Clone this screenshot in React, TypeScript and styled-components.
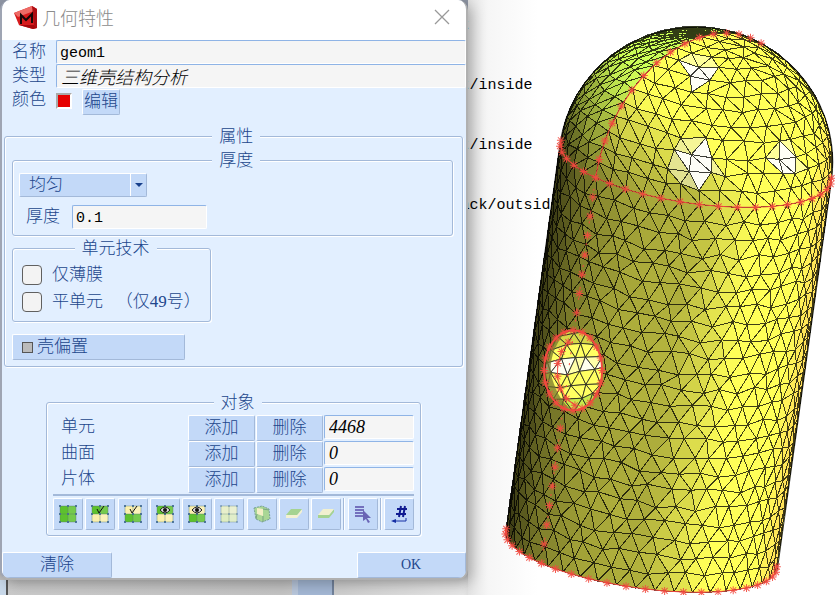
import React from "react";
import styled, { createGlobalStyle, css } from "styled-components";

const ink = "#21468c";
const panel = "#e2efff";
const buttonBlue = "#c3d9f8";
const line = "#a3b9d9";
const mono = `"Liberation Mono", "Noto Sans CJK SC", monospace`;
const serif = `"Liberation Serif", "Noto Sans CJK SC", serif`;

const GlobalStyle = createGlobalStyle`
  * { box-sizing: border-box; }
  body {
    margin: 0;
    background: #fff;
    overflow: hidden;
    color: ${ink};
    font: 300 17px/18px ${serif};
  }
  button, input, select { font: inherit; color: inherit; border-radius: 0; }
`;

/* ---------- mesh model ---------- */

type Pt = [number, number];
type Node = { p: Pt; nx: number; ny: number; nz: number };

const C: Pt = [695.5, 162];
const U: Pt = [135.5, 19];
const V: Pt = [-6, 41];
const W: Pt = [18, -128];
const HEIGHT = 3.03;
const SEAM = (135 * Math.PI) / 180;

let seed = 11;
const rnd = () => {
  seed = (seed * 16807) % 2147483647;
  return seed / 2147483647 - 0.5;
};

const place = (x: number, y: number, z: number): Pt => {
  const v = z < 0 ? y * (1 + z * 0.03) : y;
  return [
    C[0] + U[0] * x + V[0] * v + W[0] * z,
    C[1] + U[1] * x + V[1] * v + W[1] * z,
  ];
};
const wall = (t: number, h: number): Node => ({
  p: place(Math.cos(t), Math.sin(t), -h),
  nx: Math.cos(t),
  ny: Math.sin(t),
  nz: 0,
});
const cap = (t: number, f: number): Node => {
  const c = Math.cos(f);
  const x = Math.cos(t) * c;
  const y = Math.sin(t) * c;
  const z = Math.sin(f);
  return { p: place(x, y, z), nx: x, ny: y, nz: z };
};

const glints: [number, number, number][] = [
  [697, 72, 13],
  [696, 164, 17],
  [785, 161, 12],
];

const faces: { d: string; fill: string }[] = [];
const edges: string[] = [];
const pt = (p: Pt) => `${p[0].toFixed(1)} ${p[1].toFixed(1)}`;

const addFace = (a: Node, b: Node, c: Node, green: boolean) => {
  const nx = (a.nx + b.nx + c.nx) / 3;
  const ny = (a.ny + b.ny + c.ny) / 3;
  const nz = (a.nz + b.nz + c.nz) / 3;
  if (ny * 0.956 + nz * 0.3 < 0.005) return;
  const mx = (a.p[0] + b.p[0] + c.p[0]) / 3;
  const my = (a.p[1] + b.p[1] + c.p[1]) / 3;
  let k = 0.69 + nz * 0.55 + rnd() * 0.035;
  k += nx > 0 ? nx * 0.64 : -0.33 * nx ** 2 - 0.16 * nx ** 6;
  k = Math.max(0.16, Math.min(1, k));
  let r = 255 * k;
  let g = 255 * k;
  let bl = 88 * k;
  if (green) {
    r *= 1 - Math.min(0.2, nz * 0.25);
  }
  if (nx > 0.85) g *= 1 - (nx - 0.85) * 0.9;
  for (const [gx, gy, gr] of glints) {
    const dist = Math.hypot(mx - gx, my - gy);
    const w = dist < gr ? 0.95 : dist < gr * 1.35 ? 0.4 : 0;
    r += (255 - r) * w;
    g += (255 - g) * w;
    bl += (255 - bl) * w;
  }
  const d = `M${pt(a.p)}L${pt(b.p)}L${pt(c.p)}Z`;
  faces.push({ d, fill: `rgb(${r | 0},${g | 0},${bl | 0})` });
  edges.push(d);
};

const strip = (lo: Node[], hi: Node[], green: boolean) => {
  let i = 0;
  let j = 0;
  while (i < lo.length - 1 || j < hi.length - 1) {
    const a = (i + 0.5) / (lo.length - 1);
    const b = hi.length > 1 ? (j + 0.5) / (hi.length - 1) : 9;
    if (j >= hi.length - 1 || (i < lo.length - 1 && a <= b)) {
      addFace(lo[i], lo[i + 1], hi[j], green);
      i++;
    } else {
      addFace(lo[i], hi[j], hi[j + 1], green);
      j++;
    }
  }
};

const N = 44;
const ROWS = 23;
const wallRows: Node[][] = [];
for (let r = 0; r <= ROWS; r++) {
  const row: Node[] = [];
  const end = r === 0 || r === ROWS;
  for (let k = 0; k <= N; k++) {
    const jt = end ? 0 : rnd() * 0.34;
    const jh = end ? 0 : rnd() * 0.36;
    const t = SEAM - ((k + (r % 2 ? 0.5 : 0) + jt) * 2 * Math.PI) / N;
    row.push(wall(t, ((r + jh) / ROWS) * HEIGHT));
  }
  row[N] = row[0];
  wallRows.push(row);
}
for (let r = 0; r < ROWS; r++) {
  for (let k = 0; k < N; k++) {
    const a = wallRows[r];
    const b = wallRows[r + 1];
    if (r % 2 === 0) {
      addFace(a[k], a[k + 1], b[k], false);
      addFace(b[k], b[k + 1], a[k + 1], false);
    } else {
      addFace(a[k], b[k], b[k + 1], false);
      addFace(a[k], a[k + 1], b[k + 1], false);
    }
  }
}

const CAPS = 13;
for (const green of [false, true]) {
  let prev: Node[] | null = null;
  for (let r = 0; r <= CAPS; r++) {
    const f = (r / CAPS) * (Math.PI / 2);
    const n = green ? (r === CAPS ? 1 : 22 - Math.floor(r / 3)) : Math.max(1, Math.round(22 * Math.cos(f)));
    const row: Node[] = [];
    for (let k = 0; k <= n; k++) {
      const inner = k > 0 && k < n && r > 0 && r < CAPS;
      const s = (k + (inner ? rnd() * 0.34 : 0)) / n;
      const ff = f + (inner ? rnd() * 0.035 : 0);
      row.push(cap(SEAM + (green ? s : -s) * Math.PI, ff));
    }
    if (prev) strip(prev, row, green);
    prev = row;
  }
}

const star = ([x, y]: Pt) =>
  `M${(x - 4).toFixed(1)} ${y.toFixed(1)}h8M${x.toFixed(1)} ${(y - 4).toFixed(1)}v8M${(x - 3).toFixed(1)} ${(y - 3).toFixed(1)}l6 6m0 -6l-6 6`;

const ringTop: Pt[] = [];
const ringLow: Pt[] = [];
for (let k = 0; k <= 44; k++) {
  const t = SEAM - (k * 2 * Math.PI) / N;
  if (Math.sin(t) > -0.12) {
    ringTop.push(wall(t, 0).p);
    ringLow.push(wall(t, HEIGHT).p);
  }
}
const byX = (a: Pt, b: Pt) => a[0] - b[0];
ringTop.sort(byX);
ringLow.sort(byX);
const seamCap: Pt[] = [];
for (let k = 0; k <= 11; k++) seamCap.push(cap(SEAM, (k / 11) * (Math.PI / 2)).p);
const seamBack: Pt[] = [];
for (let k = 1; k <= 4; k++) seamBack.push(cap(SEAM - Math.PI, Math.PI / 2 - k * 0.13).p);
const seamWall: Pt[] = [];
for (let k = 1; k < 20; k++) if (k < 8 || k > 12) seamWall.push(wall(SEAM, (k / 20) * HEIGHT).p);
const poly = (ps: Pt[]) => "M" + ps.map(pt).join("L");

const rim = (cx: number, cy: number, rx: number, ry: number, n: number, from = 0, to = 360): Pt[] =>
  Array.from({ length: n }, (_, i) => {
    const a = ((from + ((to - from) * i) / n) * Math.PI) / 180;
    return [cx + rx * Math.cos(a), cy + ry * Math.sin(a)] as Pt;
  });
const holeStars = rim(573, 370, 29, 40, 20);
const innerStars = rim(584, 371, 27, 36, 7, 110, 255);

const holeFaces: { d: string; fill: string }[] = [];
const grid: Pt[][] = [];
for (let r = 0; r < 8; r++) {
  grid.push(
    Array.from({ length: 7 }, (_, c) => [
      538 + c * 14 + (r % 2) * 7 + rnd() * 5,
      323 + r * 13 - c * 1.5 + rnd() * 5,
    ] as Pt),
  );
}
for (let r = 0; r < 7; r++) {
  for (let c = 0; c < 6; c++) {
    const q = [grid[r][c], grid[r][c + 1], grid[r + 1][c], grid[r + 1][c + 1]];
    const tris = r % 2 ? [[q[0], q[1], q[3]], [q[0], q[2], q[3]]] : [[q[0], q[1], q[2]], [q[1], q[2], q[3]]];
    for (const t of tris) {
      const my = (t[0][1] + t[1][1] + t[2][1]) / 3;
      const fill = my < 345 ? "#d5d748" : my > 360 && my < 371 ? (rnd() > 0 ? "#fffff0" : "#ffffa8") : my > 397 ? "#c8ea4c" : "#ffff62";
      holeFaces.push({ d: poly(t) + "Z", fill });
    }
  }
}

const outline = "M506 531L560 143A136 134 0 0 1 831 181L777 569";

const Model = () => (
  <ModelSvg viewBox="468 0 367 595" role="img" aria-label="三维壳结构网格">
    <defs>
      <clipPath id="hole"><ellipse cx="574" cy="370" rx="28" ry="39" /></clipPath>
      <linearGradient id="body">
        <stop offset="0" stopColor="#25250d" />
        <stop offset=".5" stopColor="#b0b040" />
        <stop offset=".9" stopColor="#ffff55" />
      </linearGradient>
    </defs>
    <path d={`${outline}A137 39 8 0 1 506 531Z`} fill="url(#body)" />
    {faces.map((f, i) => <path key={i} d={f.d} fill={f.fill} />)}
    <path d={edges.join("")} fill="none" stroke="#000" strokeOpacity=".75" strokeWidth="1" shapeRendering="crispEdges" />
    <path d={outline} fill="none" stroke="#000" strokeOpacity=".8" />
    <g clipPath="url(#hole)">
      {holeFaces.map((f, i) => <path key={i} d={f.d} fill={f.fill} stroke="#222" strokeWidth=".8" />)}
      <path d="M544 330h22q-20 26 -14 48q8 26 24 34h-34z" fill="#77752c" fillOpacity=".75" />
    </g>
    <g fill="none" stroke="#f2493f">
      <ellipse cx="573" cy="370" rx="29" ry="40" strokeWidth="2" />
      <path d={poly(innerStars)} />
      <path d={poly(ringTop)} />
      <path d={poly(ringLow)} />
      <path d={poly(seamCap)} />
      <path d={poly([wall(SEAM, 0).p, wall(SEAM, HEIGHT).p])} strokeDasharray="2 9" />
      <path
        d={[...ringTop, ...ringLow, ...seamCap, ...seamBack, ...seamWall, ...holeStars, ...innerStars].map(star).join("")}
        strokeOpacity=".9"
      />
    </g>
  </ModelSvg>
);

/* ---------- layout ---------- */

const Desktop = styled.main`
  display: grid;
  grid-template-columns: 56% 1fr;
  min-height: 100vh;
  background: #fff;
`;
const WindowColumn = styled.div`
  display: flex;
  flex-direction: column;
  z-index: 1;
  background: linear-gradient(#8f96a5, #a5abba);
`;
const Backdrop = styled.div`
  display: flex;
  flex: 1;
  min-height: 16px;
  margin-top: -12px;
  padding-top: 12px;
  background: linear-gradient(90deg, #cbcbcb, #c4c4c4 60%, #e8e8e8);
  box-shadow: inset 0 14px 12px -6px #aaa;
`;
const EdgeStrip = styled.i`
  width: 8px;
  background: #c9d9ea;
  border-right: 2px solid #555;
`;
const BlueStrip = styled.i`
  width: 42px;
  margin-left: auto;
  margin-right: 134px;
  background: #a4b8d5;
  border-left: 6px solid #b9c7dc;
  border-right: 2px solid #73839c;
`;
const Scene = styled.section`
  display: grid;
  position: relative;
  background: linear-gradient(90deg, #e3e3e3, #f6f6f6 20px, #fff 70px);
`;
const ModelSvg = styled.svg`
  grid-area: 1 / 1;
  display: block;
  width: 100%;
  overflow: hidden;
  z-index: 1;
`;
const Notes = styled.ul`
  grid-area: 1 / 1;
  margin: 16px 0 0 -7px;
  padding: 0;
  list-style: none;
  color: #000;
  font: 400 15px/20px ${mono};
  display: grid;
  align-content: start;
  gap: 40px;
`;

const Dialog = styled.form`
  z-index: 1;
  display: flex;
  flex-direction: column;
  background: ${panel};
  border: 2px solid #b0b0b0;
  border-top: 0;
  border-left-color: #9fa5b3;
  border-radius: 10px;
  overflow: hidden;
  box-shadow: 4px 4px 14px #0004;
`;
const TitleBar = styled.header`
  display: flex;
  align-items: center;
  height: 40px;
  padding: 0 14px 6px 11px;
  gap: 4px;
  background: #fff;
`;
const Title = styled.h1`
  flex: 1;
  margin: 0;
  font: 300 18px/24px "Noto Sans CJK SC", sans-serif;
  color: #8b8b8b;
`;
const CloseButton = styled.button`
  display: flex;
  padding: 1px;
  border: 0;
  background: none;
`;

const raised = css`
  background: ${buttonBlue};
  border: 1px solid;
  border-color: #fff ${line} ${line} #fff;
  border-radius: 2px;
`;
const Button = styled.button<{ $w?: number }>`
  ${raised}
  height: 26px;
  width: ${(p) => (p.$w ? `${p.$w}px` : "auto")};
  padding: 0;
  line-height: 24px;
`;
const Field = styled.input`
  flex: 1;
  min-width: 0;
  height: 24px;
  padding: 2px 3px 0;
  color: #000;
  background: #f5f5f5;
  border: 1px solid;
  border-color: #8fb4e6 #fff #fff #8fb4e6;
  border-radius: 2px;
  font: 400 15px/18px ${mono};
`;
const ItalicField = styled(Field)`
  padding: 0 4px;
  font: italic 300 18px/20px ${serif};
`;
const PropertyRow = styled.div`
  display: flex;
  height: 24px;
  padding-left: 10px;
`;
const RowLabel = styled.label`
  width: 44px;
  line-height: 24px;
`;
const Swatch = styled.span`
  width: 16px;
  height: 16px;
  margin: 5px 10px 0 0;
  background: #e60000;
  border: 2px solid;
  border-color: #aaa #fff #fff #aaa;
`;
const EditButton = styled(Button)`
  margin-top: 1px;
`;

const Group = styled.fieldset`
  min-width: 0;
  margin: 0;
  padding: 0;
  border: 1px solid ${line};
  border-radius: 3px;
  box-shadow: inset 1px 1px #fff, 1px 1px #fff;
`;
const Legend = styled.legend<{ $half?: number }>`
  margin: 0 auto 0 calc(50% - ${(p) => p.$half ?? 20}px);
  padding: 1px 7px 0;
  background: ${panel};
  line-height: 17px;
`;
const AttributeGroup = styled(Group)`
  margin: 15px 3px 0 2px;
  padding: 6px 9px 6px 7px;
`;
const ThicknessGroup = styled(Group)`
  padding: 4px 6px 6px;
`;
const TechniqueGroup = styled(Group)`
  width: 199px;
  margin-top: 3px;
  padding: 8px 9px 9px;
`;
const SelectBox = styled.div`
  ${raised}
  display: flex;
  position: relative;
  width: 128px;
  height: 24px;
`;
const Select = styled.select`
  appearance: none;
  flex: 1;
  padding: 0 0 0 9px;
  border: 0;
  background: none;
`;
const SelectArrow = styled.span`
  position: absolute;
  inset: 0 0 0 auto;
  display: flex;
  width: 16px;
  align-items: center;
  justify-content: center;
  border-left: 1px solid #fff;
  pointer-events: none;
`;
const ThicknessRow = styled.div`
  display: flex;
  width: 188px;
  margin-top: 8px;
  padding-left: 7px;
  label { width: 46px; line-height: 24px; }
`;
const CheckRow = styled.label`
  display: flex;
  align-items: center;
  gap: 10px;
  height: 20px;
  & + & { margin-top: 7px; }
  span { white-space: pre; }
`;
const Checkbox = styled.input`
  appearance: none;
  width: 20px;
  height: 20px;
  margin: 0;
  background: #f3f3f3;
  border: 1px solid #606060;
  border-radius: 4px;
`;
const OffsetButton = styled(Button)`
  display: flex;
  align-items: center;
  gap: 4px;
  width: 173px;
  margin-top: 12px;
  padding-left: 9px;
  i { width: 11px; height: 11px; background: #bbb; border: 1px solid #555; }
`;
const ObjectGroup = styled(Group)`
  width: 375px;
  margin: 26px 0 0 44px;
  padding: 4px 6px 5px;
`;
const ObjectRow = styled.div`
  display: flex;
  gap: 1px;
  height: 26px;
  label { flex: 1; padding-left: 8px; line-height: 24px; }
  input { flex: 0 0 90px; }
`;
const Toolbar = styled.div`
  display: flex;
  justify-content: space-between;
  margin-top: 1px;
  padding-top: 2px;
  border-top: 2px solid ${line};
`;
const IconButton = styled.button`
  ${raised}
  display: flex;
  align-items: center;
  justify-content: center;
  width: 30px;
  height: 32px;
  padding: 0;
`;
const Divider = styled.i`
  width: 2px;
  border-left: 1px solid ${line};
  border-right: 1px solid #fff;
`;
const Footer = styled.footer`
  display: flex;
  justify-content: space-between;
  margin-top: 16px;
`;
const OkButton = styled(Button)`
  font-size: 14px;
  font-weight: 400;
`;

/* ---------- icons ---------- */

const Logo = () => (
  <svg width="25" height="25" viewBox="0 0 25 25">
    <path d="M1 8L19 1l5 3v19l-4 1L6 20z" fill="#d71a1c" />
    <path d="M1 8L19 1l2 5L5 12z" fill="#ee6b66" />
    <path d="M19 1l5 3v19l-3-3z" fill="#ad0c12" />
    <path d="M6 20l15 0 3 3-4 1z" fill="#a5060b" />
    <path d="M8 19V10l5 5 6-6v9" fill="none" stroke="#160808" strokeWidth="2" />
  </svg>
);

const G = "#5dc12e";
const Y = "#fbf0ad";
type Mark = "check" | "eye" | "none";

const Grid = ({ top, low, mark = "none", faded }: { top: string; low: string; mark?: Mark; faded?: boolean }) => (
  <svg width="18" height="18" viewBox="0 0 18 18" opacity={faded ? 0.8 : 1}>
    <path d="M1 1h16v8H1z" fill={top} />
    <path d="M1 9h16v8H1z" fill={low} />
    <path d="M9 1h8v16H9z" fill="#fff" fillOpacity=".15" />
    <path d="M1 1h16v16H1zM9 1v16M1 9h16" fill="none" stroke="#567a68" strokeOpacity=".4" />
    <path
      d="M0 0h2v2H0zM8 0h2v2H8zM16 0h2v2h-2zM0 8h2v2H0zM8 8h2v2H8zM16 8h2v2h-2zM0 16h2v2H0zM8 16h2v2H8zM16 16h2v2h-2z"
      fill="#446d92"
      fillOpacity={faded ? 0.5 : 0.9}
    />
    {mark === "check" && <path d="M6 4l2 4 5-7" fill="none" stroke="#111" />}
    {mark === "eye" && (
      <>
        <path d="M4 5q5-6 10 0q-5 6 -10 0z" fill="#ddd" stroke="#222" />
        <circle cx="9" cy="5" r="2" fill="#111" />
      </>
    )}
  </svg>
);
const Solid = () => (
  <svg width="18" height="18" viewBox="0 0 18 18">
    <path d="M1 3l8-2 7 3 1 10-8 3-6-3z" fill="#a9d695" stroke="#78a096" strokeDasharray="2 1" />
    <path d="M4 3l6 1v7l-6-2z" fill="#f3efc5" />
    <path d="M10 4l6 1M10 11v6M4 9l-1 5" stroke="#79a582" />
  </svg>
);
const Slab = ({ top, low }: { top: string; low: string }) => (
  <svg width="18" height="18" viewBox="0 0 18 18">
    <path d="M1 10h11l5-6v3l-5 6H1z" fill={low} />
    <path d="M1 10L6 4h11l-5 6z" fill={top} />
  </svg>
);
const ListCursor = () => (
  <svg width="18" height="18" viewBox="0 0 18 18">
    <path d="M1 2h9M1 5h9M1 8h8M1 11h9" stroke="#7370bd" strokeWidth="2" />
    <path d="M9 5l8 8-4 0 3 4-2 1-2-4-3 2z" fill="#6964b5" />
  </svg>
);
const NumberArrow = () => (
  <svg width="18" height="18" viewBox="0 0 18 18">
    <path d="M11 1L9 12M15 1l-2 11M7 4h10M6 9h10" stroke="#101b91" strokeWidth="2" />
    <path d="M3 16h13v-3" fill="none" stroke="#1630a5" />
    <path d="M1 16l5-2v4z" fill="#1630a5" />
  </svg>
);

const tools = [
  { name: "全部", icon: <Grid top={G} low={G} /> },
  { name: "选中上部", icon: <Grid top={G} low={Y} mark="check" /> },
  { name: "选中下部", icon: <Grid top={Y} low={G} mark="check" /> },
  { name: "可见上部", icon: <Grid top={G} low={Y} mark="eye" /> },
  { name: "可见下部", icon: <Grid top={Y} low={G} mark="eye" /> },
  { name: "轮廓", icon: <Grid top="#f2f5c0" low="#e6f2b4" faded /> },
  { name: "实体", icon: <Solid /> },
  { name: "顶面", icon: <Slab top="#a5d391" low="#f3f1d2" /> },
  { name: "底面", icon: <Slab top="#f1f0cf" low="#a5d391" /> },
];

const objects = [
  { id: "elements", name: "单元", count: "4468" },
  { id: "surfaces", name: "曲面", count: "0" },
  { id: "sheets", name: "片体", count: "0" },
];

export default function App() {
  return (
    <>
      <GlobalStyle />
      <Desktop>
        <WindowColumn>
          <Dialog onSubmit={(e) => e.preventDefault()}>
            <TitleBar>
              <Logo />
              <Title>几何特性</Title>
              <CloseButton type="button" aria-label="关闭">
                <svg width="18" height="18" viewBox="0 0 18 18">
                  <path d="M2 2l14 14M16 2L2 16" stroke="#999" strokeWidth="1.3" />
                </svg>
              </CloseButton>
            </TitleBar>
            <PropertyRow>
              <RowLabel htmlFor="name">名称</RowLabel>
              <Field id="name" defaultValue="geom1" />
            </PropertyRow>
            <PropertyRow>
              <RowLabel htmlFor="type">类型</RowLabel>
              <ItalicField id="type" readOnly value="三维壳结构分析" />
            </PropertyRow>
            <PropertyRow>
              <RowLabel htmlFor="color">颜色</RowLabel>
              <Swatch />
              <EditButton id="color" type="button" $w={38}>编辑</EditButton>
            </PropertyRow>
            <AttributeGroup>
              <Legend>属性</Legend>
              <ThicknessGroup>
                <Legend>厚度</Legend>
                <SelectBox>
                  <Select aria-label="厚度分布" defaultValue="均匀">
                    <option>均匀</option>
                  </Select>
                  <SelectArrow>
                    <svg width="8" height="4" viewBox="0 0 8 4"><path d="M0 0h8L4 4z" fill="#173f8b" /></svg>
                  </SelectArrow>
                </SelectBox>
                <ThicknessRow>
                  <label htmlFor="thickness">厚度</label>
                  <Field id="thickness" defaultValue="0.1" />
                </ThicknessRow>
              </ThicknessGroup>
              <TechniqueGroup>
                <Legend $half={37}>单元技术</Legend>
                <CheckRow><Checkbox type="checkbox" /><span>仅薄膜</span></CheckRow>
                <CheckRow><Checkbox type="checkbox" /><span>平单元{"   "}（仅49号）</span></CheckRow>
              </TechniqueGroup>
              <OffsetButton type="button"><i />壳偏置</OffsetButton>
            </AttributeGroup>
            <ObjectGroup>
              <Legend>对象</Legend>
              {objects.map((o) => (
                <ObjectRow key={o.id}>
                  <label htmlFor={o.id}>{o.name}</label>
                  <Button type="button" $w={67}>添加</Button>
                  <Button type="button" $w={67}>删除</Button>
                  <ItalicField id={o.id} readOnly value={o.count} />
                </ObjectRow>
              ))}
              <Toolbar>
                {tools.map((t) => (
                  <IconButton key={t.name} type="button" aria-label={t.name}>{t.icon}</IconButton>
                ))}
                <Divider />
                <IconButton type="button" aria-label="列表选择"><ListCursor /></IconButton>
                <Divider />
                <IconButton type="button" aria-label="编号"><NumberArrow /></IconButton>
              </Toolbar>
            </ObjectGroup>
            <Footer>
              <Button type="button" $w={110}>清除</Button>
              <OkButton type="submit" $w={109}>OK</OkButton>
            </Footer>
          </Dialog>
          <Backdrop><EdgeStrip /><BlueStrip /></Backdrop>
        </WindowColumn>
        <Scene>
          <Notes>
            <li>t</li>
            <li>t/inside</li>
            <li>t/inside</li>
            <li>ack/outside</li>
          </Notes>
          <Model />
        </Scene>
      </Desktop>
    </>
  );
}
